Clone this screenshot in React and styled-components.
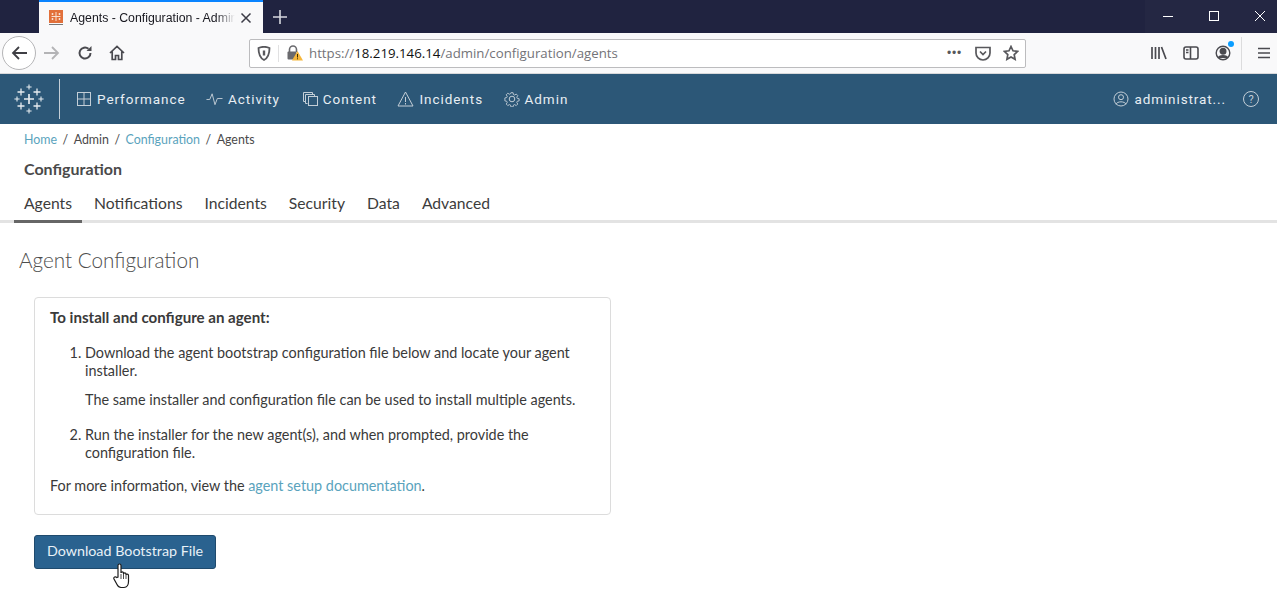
import React from "react";
import styled, { createGlobalStyle } from "styled-components";

const GlobalStyle = createGlobalStyle`
    html, body {
        margin: 0;
        padding: 0;
        background: #fff;
        overflow: hidden;
    }
    body {
        font-family: "Lato", "Liberation Sans", sans-serif;
    }
`

const NAV_ITEMS = [
    { label: "Performance", icon: <GridIcon /> },
    { label: "Activity", icon: <PulseIcon /> },
    { label: "Content", icon: <CopyIcon />, nudge: 1.5 },
    { label: "Incidents", icon: <WarnIcon /> },
    { label: "Admin", icon: <GearIcon /> },
]

const TABS = ["Agents", "Notifications", "Incidents", "Security", "Data", "Advanced"]

function GridIcon() {
    return (
        <svg width="16" height="16" viewBox="0 0 16 16" fill="none" stroke="#c3ced7" strokeWidth="1">
            <rect x="1.5" y="1.5" width="13" height="13" />
            <path d="M8 1.5v13M1.5 8h13" />
        </svg>
    )
}

function PulseIcon() {
    return (
        <svg width="17" height="16" viewBox="0 0 18 16" fill="none" stroke="#c3ced7" strokeWidth="1">
            <path d="M0.5 8.5h3.5l2.5-6 3 11.5 2.5-6.5h5.5" />
        </svg>
    )
}

function CopyIcon() {
    return (
        <svg width="16" height="16" viewBox="0 0 16 16" fill="none" stroke="#c3ced7" strokeWidth="1">
            <path d="M3.5 10.5h-2v-9h9v2" />
            <path d="M5.5 12.5h-2v-9h9v2" />
            <rect x="6.5" y="5.5" width="9" height="9" />
        </svg>
    )
}

function WarnIcon() {
    return (
        <svg width="17" height="16" viewBox="0 0 17 16" fill="none" stroke="#c3ced7" strokeWidth="1">
            <path d="M8.5 1L16 15H1z" />
            <path d="M8.5 6v5M8.5 12v1.5" />
        </svg>
    )
}

function GearIcon() {
    return (
        <svg width="16" height="16" viewBox="0 0 16 16" fill="none" stroke="#c3ced7" strokeWidth="1">
            <circle cx="8" cy="8" r="2.8" />
            <path d="M6.8 1h2.4l.4 2 1.3.6 1.8-1.1 1.7 1.7-1.1 1.8.6 1.3 2 .4v2.4l-2 .4-.6 1.3 1.1 1.8-1.7 1.7-1.8-1.1-1.3.6-.4 2H6.8l-.4-2-1.3-.6-1.8 1.1-1.7-1.7 1.1-1.8-.6-1.3-2-.4V6.8l2-.4.6-1.3-1.1-1.8 1.7-1.7 1.8 1.1 1.3-.6z" transform="translate(0.8 0.8) scale(0.9)" />
        </svg>
    )
}

function TableauLogo() {
    const marks = [
        [15, 15, 5, 1.7],
        [15, 3, 2.6, 1.1], [15, 27, 2.6, 1.1], [3, 15, 2.6, 1.1], [27, 15, 2.6, 1.1],
        [7, 8, 3.5, 1.3], [23, 8, 3.5, 1.3], [7, 22, 3.5, 1.3], [23, 22, 3.5, 1.3],
    ]
    return (
        <svg width="30" height="30" viewBox="0 0 30 30" stroke="#e6ecf0" fill="none">
            {marks.map(([x, y, r, w], i) => (
                <path key={i} strokeWidth={w} d={`M${x - r} ${y}h${r * 2}M${x} ${y - r}v${r * 2}`} />
            ))}
        </svg>
    )
}

function App() {
    return (
        <>
            <GlobalStyle />
            <Page>
                <TitleBar>
                    <BrowserTab>
                        <svg width="14" height="15" viewBox="0 0 14 15">
                            <rect width="14" height="13" fill="#e2703a" />
                            <path d="M7 2v9M2.500 6.500h9M3.500 3v2M2.500 4h2M10.500 3v2M9.500 4h2M3.500 8v2M2.500 9h2M10.500 8v2M9.500 9h2" stroke="#f8e0d2" strokeWidth="1" />
                            <rect y="14" width="14" height="1" fill="#777" />
                        </svg>
                        <TabTitle>Agents - Configuration - Admin</TabTitle>
                        <svg width="12" height="12" viewBox="0 0 12 12" stroke="#3c3c46" strokeWidth="1.5">
                            <path d="M1.5 1.5l9 9M10.5 1.5l-9 9" />
                        </svg>
                    </BrowserTab>
                    <NewTab>
                        <svg width="14" height="14" viewBox="0 0 14 14" stroke="#d6d7de" strokeWidth="1.6">
                            <path d="M7 0v14M0 7h14" />
                        </svg>
                    </NewTab>
                    <WindowButtons>
                        <WindowButton>
                            <svg width="10" height="10" viewBox="0 0 10 10" stroke="#fff"><path d="M0 5.5h10" /></svg>
                        </WindowButton>
                        <WindowButton>
                            <svg width="10" height="10" viewBox="0 0 10 10" fill="none" stroke="#fff"><rect x=".5" y=".5" width="9" height="9" /></svg>
                        </WindowButton>
                        <WindowButton>
                            <svg width="10" height="10" viewBox="0 0 10 10" stroke="#fff"><path d="M0 0l10 10M10 0L0 10" /></svg>
                        </WindowButton>
                    </WindowButtons>
                </TitleBar>

                <Toolbar>
                    <BackButton>
                        <svg width="16" height="14" viewBox="0 0 16 14" fill="none" stroke="#3f3f44" strokeWidth="1.8">
                            <path d="M16 7H2M8 1L2 7l6 6" />
                        </svg>
                    </BackButton>
                    <ToolIcon $w={20} $ml={6}>
                        <svg width="16" height="14" viewBox="0 0 16 14" fill="none" stroke="#b4b4b6" strokeWidth="1.8">
                            <path d="M0 7h14M8 1l6 6-6 6" />
                        </svg>
                    </ToolIcon>
                    <ToolIcon $w={32} $ml={7}>
                        <svg width="16" height="16" viewBox="0 0 16 16" fill="none" stroke="#4a4a4f" strokeWidth="2">
                            <path d="M13.5 8A5.5 5.5 0 1 1 11.5 3.8" />
                            <path d="M14.5 1v5h-5" fill="#4a4a4f" stroke="none" />
                        </svg>
                    </ToolIcon>
                    <ToolIcon $w={32}>
                        <svg width="16" height="16" viewBox="0 0 16 16" fill="none" stroke="#4a4a4f" strokeWidth="1.7">
                            <path d="M1 8l7-6.5L15 8M3.2 6.5v8h3.3v-4h3v4h3.3v-8" />
                        </svg>
                    </ToolIcon>
                    <UrlBar>
                        <ShieldSlot>
                            <svg width="14" height="15" viewBox="0 0 14 15" fill="none" stroke="#58585c" strokeWidth="1.8">
                                <path d="M1.5 2c3-1.300 8-1.300 11 0 0 6-1.500 10-5.500 12C3 12 1.500 8 1.500 2z" />
                                <path d="M7 4.500v5" strokeWidth="2.400" />
                            </svg>
                        </ShieldSlot>
                        <LockSlot>
                            <svg width="18" height="16" viewBox="0 0 18 16">
                                <path d="M3.500 7V4.500a3.500 3.500 0 0 1 7 0V7" fill="none" stroke="#6a6a6e" strokeWidth="1.600" />
                                <rect x="1.500" y="6.500" width="9" height="8" rx="1" fill="#6a6a6e" />
                                <path d="M11.500 6l5.500 9.500H6z" fill="#f6b73c" />
                                <path d="M11.500 9v3.500M11.500 13.300v1" stroke="#3a2c00" strokeWidth="1" />
                            </svg>
                        </LockSlot>
                        <UrlText>
                            https://<strong>18.219.146.14</strong>/admin/configuration/agents
                        </UrlText>
                        <Dots>•••</Dots>
                        <ToolIcon $w={28}>
                            <svg width="16" height="15" viewBox="0 0 16 15" fill="none" stroke="#58585c" strokeWidth="1.700">
                                <path d="M1 1.500h14v5.500a7 7 0 0 1-14 0zM5 5.500l3 3 3-3" />
                            </svg>
                        </ToolIcon>
                        <ToolIcon $w={28}>
                            <svg width="16" height="16" viewBox="0 0 16 16" fill="none" stroke="#58585c" strokeWidth="1.700">
                                <path d="M8 1.500l2 4.300 4.700.6-3.500 3.200.9 4.700L8 12l-4.100 2.300.9-4.700L1.300 6.400 6 5.800z" />
                            </svg>
                        </ToolIcon>
                    </UrlBar>
                    <RightTools>
                        <ToolIcon $w={32}>
                            <svg width="16" height="14" viewBox="0 0 16 14" fill="none" stroke="#4a4a4f" strokeWidth="1.700">
                                <path d="M1 1v12M4.500 1v12M8 1v12M10.500 1l4.500 12" />
                            </svg>
                        </ToolIcon>
                        <ToolIcon $w={32}>
                            <svg width="16" height="14" viewBox="0 0 16 14" fill="none" stroke="#4a4a4f" strokeWidth="1.600">
                                <rect x="1" y="1" width="14" height="12" rx="2" />
                                <path d="M7.500 1v12M3 4h2.500M3 6.500h2.500" />
                            </svg>
                        </ToolIcon>
                        <ProfileSlot>
                            <svg width="16" height="16" viewBox="0 0 16 16" fill="none" stroke="#4a4a4f" strokeWidth="1.400">
                                <circle cx="8" cy="8" r="6.800" />
                                <circle cx="8" cy="6.300" r="2.800" fill="#4a4a4f" />
                                <path d="M3.500 13c.5-3 8.500-3 9 0" fill="#4a4a4f" />
                            </svg>
                            <ProfileDot />
                        </ProfileSlot>
                        <ToolbarSeparator />
                        <ToolIcon $w={44}>
                            <svg width="14" height="12" viewBox="0 0 14 12" stroke="#4a4a4f" strokeWidth="1.600">
                                <path d="M1 1.500h12M1 6h12M1 10.500h12" />
                            </svg>
                        </ToolIcon>
                    </RightTools>
                </Toolbar>

                <NavBar>
                    <LogoCell>
                        <TableauLogo />
                    </LogoCell>
                    <NavItems>
                        {NAV_ITEMS.map((item) => (
                            <NavItem key={item.label} $nudge={item.nudge}>
                                {item.icon}
                                <NavLabel>{item.label}</NavLabel>
                            </NavItem>
                        ))}
                    </NavItems>
                    <NavRight>
                        <svg width="16" height="16" viewBox="0 0 16 16" fill="none" stroke="#c3ced7" strokeWidth="1">
                            <circle cx="8" cy="8" r="7" />
                            <circle cx="8" cy="6.200" r="2.500" />
                            <path d="M3 13.300c1-3.300 9-3.300 10 0" />
                        </svg>
                        <UserName>administrat...</UserName>
                        <HelpCircle>?</HelpCircle>
                    </NavRight>
                </NavBar>

                <Breadcrumbs>
                    <CrumbLink>Home</CrumbLink>
                    <Slash>/</Slash>
                    <span>Admin</span>
                    <Slash>/</Slash>
                    <CrumbLink>Configuration</CrumbLink>
                    <Slash>/</Slash>
                    <span>Agents</span>
                </Breadcrumbs>
                <PageTitle>Configuration</PageTitle>
                <TabRow>
                    {TABS.map((tab, i) => (
                        <TabItem key={tab} $active={i === 0}>{tab}</TabItem>
                    ))}
                </TabRow>

                <Content>
                    <Heading>Agent Configuration</Heading>
                    <InfoBox>
                        <InfoTitle>To install and configure an agent:</InfoTitle>
                        <Steps>
                            <Step>
                                <StepText>Download the agent bootstrap configuration file below and locate your agent installer.</StepText>
                                <StepNote>The same installer and configuration file can be used to install multiple agents.</StepNote>
                            </Step>
                            <Step>
                                <StepText>Run the installer for the new agent(s), and when prompted, provide the configuration file.</StepText>
                            </Step>
                        </Steps>
                        <MoreInfo>
                            For more information, view the <DocLink>agent setup documentation</DocLink>.
                        </MoreInfo>
                    </InfoBox>
                    <DownloadButton>Download Bootstrap File</DownloadButton>
                </Content>

                <Cursor width="18" height="26" viewBox="0 0 18 26">
                    <path d="M5 14V2.500c0-2 3-2 3 0V10c0-1.500 2.500-1.500 2.500 0v1c0-1.500 2.500-1.500 2.500 0v1c0-1.300 2.500-1.300 2.500.5v6c0 3-1.500 6-4.500 6H8c-2 0-3-1-4-3l-3-5.500c-.8-1.800 1.500-3 2.700-1.500z" fill="#fff" stroke="#1c1c1c" strokeWidth="1.200" />
                    <path d="M8 11v5M10.500 11v5M13 12v4" stroke="#1c1c1c" strokeWidth=".8" />
                </Cursor>
            </Page>
        </>
    )
}

export default App;

const Page = styled.div`
    position: relative;
    width: 1277px;
    height: 606px;
    overflow: hidden;
    background: #fff;
    color: #333;
`
const TitleBar = styled.div`
    display: flex;
    align-items: stretch;
    height: 33px;
    padding-left: 39px;
    background: #202340;
`
const BrowserTab = styled.div`
    display: flex;
    align-items: center;
    box-sizing: border-box;
    width: 224px;
    padding: 0 11px 0 10px;
    background: #f9f9fa;
    border-top: 2px solid #0a84ff;
    font-family: "Liberation Sans", sans-serif;
`
const TabTitle = styled.span`
    flex: 1;
    margin-left: 7px;
    overflow: hidden;
    white-space: nowrap;
    font-size: 12.3px;
    color: #18181f;
    -webkit-mask-image: linear-gradient(to right, #000 86%, transparent 97%);
`
const NewTab = styled.div`
    display: flex;
    align-items: center;
    justify-content: center;
    width: 34px;
`
const WindowButtons = styled.div`
    display: flex;
    margin-left: auto;
    margin-right: -6px;
`
const WindowButton = styled.div`
    display: flex;
    align-items: center;
    justify-content: center;
    width: 46px;
    padding-bottom: 1px;
    background: rgba(255, 255, 255, 0.02);
`
const Toolbar = styled.div`
    display: flex;
    align-items: center;
    box-sizing: border-box;
    height: 41px;
    padding-left: 2px;
    background: #f9f9fa;
    border-bottom: 1px solid #d8d8da;
`
const BackButton = styled.div`
    display: flex;
    align-items: center;
    justify-content: center;
    flex: none;
    box-sizing: border-box;
    width: 34px;
    height: 34px;
    background: #fff;
    border: 1px solid #b5b5b7;
    border-radius: 50%;
`
const ToolIcon = styled.div`
    display: flex;
    align-items: center;
    justify-content: center;
    flex: none;
    width: ${(p) => p.$w}px;
    margin-left: ${(p) => p.$ml || 0}px;
`
const UrlBar = styled.div`
    display: flex;
    align-items: center;
    flex: none;
    box-sizing: border-box;
    width: 777px;
    height: 29px;
    margin-left: 116px;
    background: #fff;
    border: 1px solid #bcbcbe;
    border-radius: 2px;
`
const ShieldSlot = styled.div`
    display: flex;
    justify-content: center;
    align-items: center;
    box-sizing: border-box;
    width: 29px;
    height: 17px;
    border-right: 1px solid #e1e1e2;
`
const LockSlot = styled.div`
    display: flex;
    margin-left: 7px;
`
const UrlText = styled.div`
    flex: 1;
    margin-left: 5px;
    font-family: "Open Sans", sans-serif;
    font-size: 13.25px;
    color: #737378;

    strong {
        font-weight: 400;
        color: #111;
    }
`
const Dots = styled.span`
    margin-right: 7px;
    font-family: "Liberation Sans", sans-serif;
    font-size: 12px;
    letter-spacing: 0.8px;
    color: #58585c;
`
const RightTools = styled.div`
    display: flex;
    align-items: center;
    flex: none;
    margin-left: 117px;
`
const ProfileSlot = styled.div`
    position: relative;
    display: flex;
    justify-content: center;
    width: 32px;
`
const ProfileDot = styled.span`
    position: absolute;
    top: -4px;
    right: 5px;
    width: 6px;
    height: 6px;
    background: #0a9dff;
    border-radius: 50%;
`
const ToolbarSeparator = styled.div`
    width: 1px;
    height: 33px;
    margin-left: 2px;
    background: #dcdcdd;
`
const NavBar = styled.nav`
    display: flex;
    align-items: center;
    height: 50px;
    background: #2c5777;
    font-family: "Roboto", "Liberation Sans", sans-serif;
`
const LogoCell = styled.div`
    display: flex;
    align-items: center;
    box-sizing: border-box;
    width: 60px;
    height: 40px;
    padding-left: 14px;
    border-right: 1px solid #c3ced7;
`
const NavItems = styled.div`
    display: flex;
    align-items: center;
    gap: 20.5px;
    margin-left: 16px;
`
const NavItem = styled.div`
    display: flex;
    align-items: center;
    gap: 5px;
    margin-left: ${(p) => p.$nudge || 0}px;
`
const NavLabel = styled.span`
    font-size: 13.5px;
    letter-spacing: 0.95px;
    color: #e8eef3;
`
const NavRight = styled.div`
    display: flex;
    align-items: center;
    margin-left: auto;
    padding-right: 18px;
`
const UserName = styled.span`
    margin-left: 5px;
    font-size: 13.5px;
    letter-spacing: 0.9px;
    color: #e8eef3;
`
const HelpCircle = styled.span`
    display: flex;
    align-items: center;
    justify-content: center;
    box-sizing: border-box;
    width: 16px;
    height: 16px;
    margin-left: 17px;
    border: 1px solid #c3ced7;
    border-radius: 50%;
    font-size: 11px;
    color: #c3ced7;
`
const Breadcrumbs = styled.div`
    display: flex;
    align-items: center;
    height: 16px;
    margin: 7px 0 0 24px;
    font-size: 12.4px;
    color: #4a4a4a;
`
const CrumbLink = styled.a`
    color: #5aa3bd;
`
const Slash = styled.span`
    margin: 0 5.5px;
`
const PageTitle = styled.h1`
    margin: 13px 0 0 24px;
    font-size: 16px;
    line-height: 18px;
    font-weight: 700;
    color: #4a4a4a;
`
const TabRow = styled.div`
    display: flex;
    box-sizing: border-box;
    height: 33px;
    margin-top: 12px;
    padding-left: 14px;
    border-bottom: 3px solid #e3e3e3;
`
const TabItem = styled.div`
    box-sizing: border-box;
    height: 33px;
    padding: 3px 10px 0 ${(p) => (p.$active ? 10 : 12)}px;
    font-size: 15.7px;
    line-height: 20px;
    color: #3c3c3c;
    border-bottom: 3px solid ${(p) => (p.$active ? "#666" : "transparent")};
`
const Content = styled.main`
    padding-left: 34px;
`
const Heading = styled.h2`
    margin: 24px 0 0 -15px;
    font-size: 20.7px;
    line-height: 26px;
    font-weight: 300;
    color: #4d4d4d;
`
const InfoBox = styled.section`
    box-sizing: border-box;
    width: 577px;
    height: 218px;
    margin-top: 24px;
    padding: 10px 15px;
    border: 1px solid #dcdcdc;
    border-radius: 4px;
    font-size: 14.4px;
    line-height: 18px;
    color: #3a3a3a;
`
const InfoTitle = styled.div`
    font-size: 15.1px;
    font-weight: 700;
`
const Steps = styled.ol`
    margin: 18px 0 0;
    padding-left: 35px;
`
const Step = styled.li`
    margin-bottom: 17px;
`
const StepText = styled.div``
const StepNote = styled.div`
    margin-top: 11px;
`
const MoreInfo = styled.div`
    margin-top: -2px;
`
const DocLink = styled.a`
    color: #5aa3bd;
`
const DownloadButton = styled.button`
    display: block;
    box-sizing: border-box;
    width: 182px;
    height: 34px;
    margin-top: 20px;
    padding: 0 0 4px;
    background: #2a628f;
    border: 1px solid #1f4a6d;
    border-radius: 3px;
    font-family: inherit;
    font-size: 14.3px;
    color: #e8f1f7;
`
const Cursor = styled.svg`
    position: absolute;
    left: 113px;
    top: 563px;
`
